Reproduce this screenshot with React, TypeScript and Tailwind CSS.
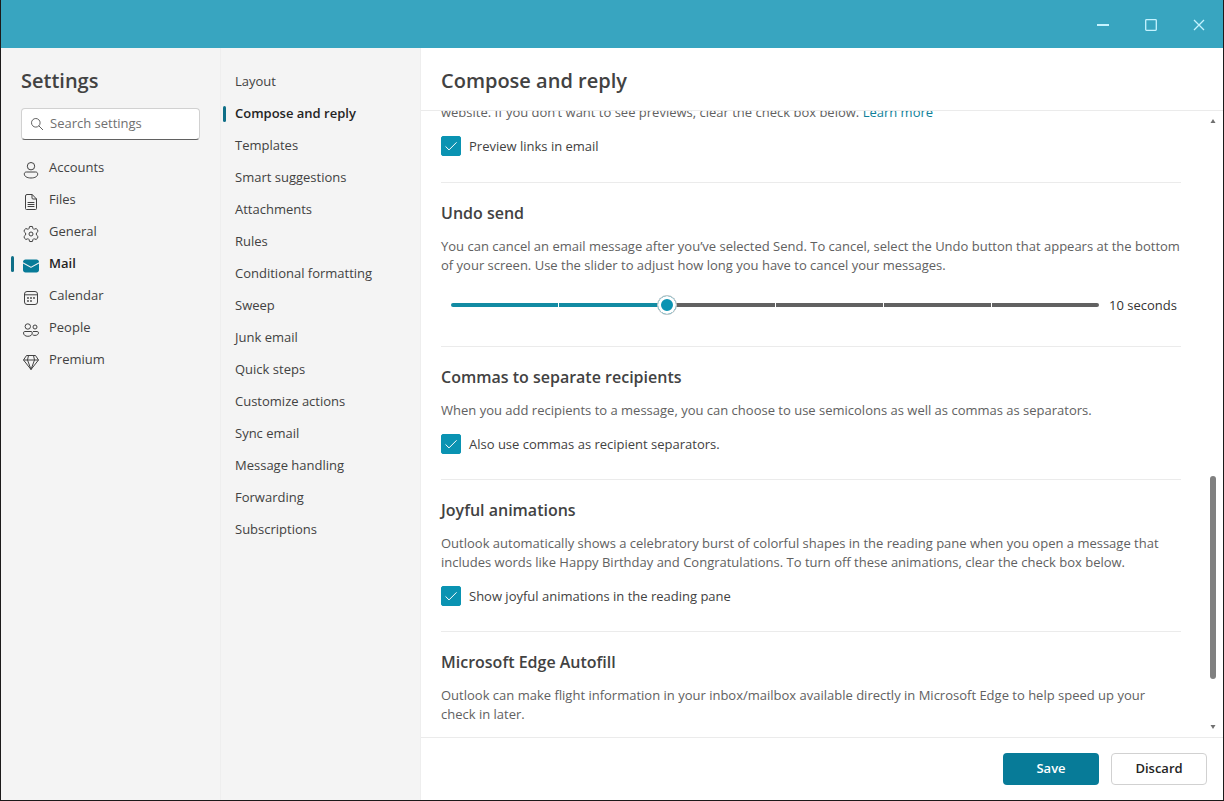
import { useState, type ReactNode } from "react";

const iconClass = "h-5 w-5 shrink-0 fill-none stroke-[#424242] stroke-1";

const icons: Record<string, ReactNode> = {
  Accounts: (
    <svg viewBox="0 0 20 20" className={iconClass} aria-hidden="true">
      <circle cx="10" cy="6.2" r="3.7" />
      <path d="M5.3 12h9.4c1.2 0 2 .9 2 2 0 2.400-2.700 4-6.700 4s-6.700-1.600-6.700-4c0-1.100.8-2 2-2z" />
    </svg>
  ),
  Files: (
    <svg viewBox="0 0 20 20" className={iconClass} aria-hidden="true">
      <path d="M6 2.500h5.200L15.500 7v9.500a1 1 0 0 1-1 1H5.500a1 1 0 0 1-1-1V4a1.500 1.500 0 0 1 1.500-1.500z" />
      <path d="M11 2.700V6a1 1 0 0 0 1 1h3.300M7 10.500h6M7 12.500h6M7 14.500h6" strokeLinecap="round" />
    </svg>
  ),
  General: (
    <svg viewBox="0 0 20 20" className={iconClass} aria-hidden="true">
      <path
        strokeLinejoin="round"
        d="M8.500 2.600Q10 2.200 11.500 2.600L11.900 4.400Q12.300 5.500 13.500 5.100L15.300 4.500Q16.500 5.700 17.100 7.300L15.700 8.700Q14.700 10 15.700 11.300L17.100 12.700Q16.500 14.300 15.300 15.500L13.500 14.900Q12.300 14.500 11.900 15.600L11.500 17.400Q10 17.800 8.500 17.400L8.100 15.600Q7.700 14.500 6.500 14.900L4.700 15.500Q3.500 14.300 2.900 12.700L4.300 11.300Q5.300 10 4.300 8.700L2.900 7.300Q3.500 5.700 4.700 4.500L6.500 5.100Q7.700 5.500 8.100 4.400z"
      />
      <circle cx="10" cy="10" r="2" />
    </svg>
  ),
  Mail: (
    <svg viewBox="0 0 20 20" className="h-5 w-5 shrink-0 fill-[#077b98]" aria-hidden="true">
      <path d="M2 6.300V5.900C2 4.600 3.100 3.500 4.500 3.500h11C16.900 3.500 18 4.600 18 5.900v.4l-8 4.400z" />
      <path d="M2 7.500v6.600c0 1.400 1.100 2.400 2.500 2.400h11c1.400 0 2.500-1 2.500-2.400V7.500l-7.800 4.300a.5.500 0 0 1-.5 0z" />
    </svg>
  ),
  Calendar: (
    <svg viewBox="0 0 20 20" className={iconClass} aria-hidden="true">
      <rect x="3.500" y="3.500" width="13" height="13" rx="2.500" />
      <path d="M3.500 6.800h13" />
      <g className="fill-[#424242] stroke-none">
        <circle cx="10" cy="10" r="0.900" />
        <circle cx="13" cy="10" r="0.900" />
        <circle cx="7" cy="10" r="0.900" />
        <circle cx="7" cy="13" r="0.900" />
        <circle cx="10" cy="13" r="0.900" />
      </g>
    </svg>
  ),
  People: (
    <svg viewBox="0 0 20 20" className={iconClass} aria-hidden="true">
      <circle cx="6.800" cy="6.500" r="2.700" />
      <circle cx="14" cy="7" r="2" />
      <path d="M3.800 11.500h6.200c.8 0 1.300.6 1.300 1.300 0 2-1.600 3.500-4.400 3.500s-4.400-1.500-4.400-3.500c0-.7.500-1.300 1.300-1.300z" />
      <path d="M12.300 11.500h3.900c.8 0 1.300.6 1.300 1.300 0 1.500-1.300 2.600-3.500 2.600-.8 0-1.400-.1-2-.4" strokeLinecap="round" />
    </svg>
  ),
  Premium: (
    <svg viewBox="0 0 20 20" className={iconClass} aria-hidden="true">
      <path
        strokeLinejoin="round"
        d="M5.500 3.500h9l3 4.500-7.500 9.500L2.500 8zM2.500 8h15M7.500 3.500L6.500 8l3.500 9.500L13.500 8l-1-4.500"
      />
    </svg>
  ),
};

const sections = ["Accounts", "Files", "General", "Mail", "Calendar", "People", "Premium"];

const pages = [
  "Layout",
  "Compose and reply",
  "Templates",
  "Smart suggestions",
  "Attachments",
  "Rules",
  "Conditional formatting",
  "Sweep",
  "Junk email",
  "Quick steps",
  "Customize actions",
  "Sync email",
  "Message handling",
  "Forwarding",
  "Subscriptions",
];

function Marker({ active }: { active: boolean }) {
  return <span className={`h-4 w-[3px] shrink-0 rounded-sm ${active ? "bg-[#0f6f88]" : ""}`} />;
}

function Checkbox({ label }: { label: string }) {
  return (
    <label className="flex items-center gap-2 self-start leading-5 text-[#424242]">
      <span className="grid h-5 w-5 shrink-0">
        <input
          type="checkbox"
          defaultChecked
          className="peer col-start-1 row-start-1 h-5 w-5 appearance-none rounded-xs border border-[#616161] checked:border-[#0a93b2] checked:bg-[#0a93b2]"
        />
        <svg
          viewBox="0 0 20 20"
          aria-hidden="true"
          className="pointer-events-none invisible col-start-1 row-start-1 h-5 w-5 fill-none stroke-white stroke-1 peer-checked:visible"
        >
          <path d="M4.800 10.700l3.200 3.200 7.300-7.300" strokeLinecap="round" strokeLinejoin="round" />
        </svg>
      </span>
      {label}
    </label>
  );
}

function Setting({ title, text, children }: { title: string; text: string; children?: ReactNode }) {
  return (
    <section className="flex flex-col gap-3.5 border-t border-[#ebebeb] pt-5 pb-[25px]">
      <h3 className="text-base leading-5 font-semibold">{title}</h3>
      <p className="leading-[19px] text-[#616161]">{text}</p>
      {children}
    </section>
  );
}

function UndoSlider() {
  const [step, setStep] = useState(2);
  return (
    <div className="flex items-center pt-1.5 pb-1.5 leading-5">
      <div className="relative flex h-5 flex-1 items-center px-2.5">
        <div className="flex h-1 flex-1 gap-px overflow-hidden rounded-sm">
          {[0, 1, 2, 3, 4, 5].map((i) => (
            <span key={i} className={`flex-1 ${i < step ? "bg-[#128ba3]" : "bg-[#616161]"}`} />
          ))}
        </div>
        <input
          type="range"
          min={0}
          max={6}
          value={step}
          onChange={(e) => setStep(Number(e.target.value))}
          aria-label="Time to cancel a message"
          className="absolute inset-0 h-5 w-full appearance-none bg-transparent [&::-webkit-slider-thumb]:h-5 [&::-webkit-slider-thumb]:w-5 [&::-webkit-slider-thumb]:appearance-none [&::-webkit-slider-thumb]:rounded-full [&::-webkit-slider-thumb]:border [&::-webkit-slider-thumb]:border-[#c8c8c8] [&::-webkit-slider-thumb]:bg-[#0a93b2] [&::-webkit-slider-thumb]:shadow-[inset_0_0_0_3px_white]"
        />
      </div>
      <output className="w-[72px] whitespace-nowrap text-[#333333]">{step * 5} seconds</output>
    </div>
  );
}

export default function App() {
  return (
    <div className="flex h-screen flex-col overflow-hidden border-x border-b border-[#1c1a1a] bg-white font-['Open_Sans','Noto_Sans',sans-serif] text-[13px] text-[#424242]">
      <header className="flex h-12 shrink-0 justify-end bg-[#38a5c0]">
        <button aria-label="Minimize" className="grid w-12 place-items-center">
          <svg viewBox="0 0 14 14" className="h-3.5 w-3.5 fill-none stroke-[#c5f3ff] stroke-2">
            <path d="M1 8h12" />
          </svg>
        </button>
        <button aria-label="Maximize" className="grid w-12 place-items-center">
          <svg viewBox="0 0 14 14" className="h-3.5 w-3.5 fill-none stroke-[#c5f3ff] stroke-[1.3]">
            <rect x="1.700" y="2.700" width="10.600" height="10.600" rx="0.800" />
          </svg>
        </button>
        <button aria-label="Close" className="grid w-12 place-items-center">
          <svg viewBox="0 0 14 14" className="h-3.5 w-3.5 fill-none stroke-[#c5f3ff] stroke-[1.3]">
            <path d="M2 3l10 10M12 3L2 13" />
          </svg>
        </button>
      </header>

      <div className="flex min-h-0 flex-1">
        <aside className="w-[220px] shrink-0 border-r border-[#eeeeee] bg-[#f4f4f4] pt-5">
          <h1 className="px-5 text-xl leading-[26px] font-semibold">Settings</h1>
          <label className="mx-5 mt-3.5 flex h-8 items-center gap-1.5 rounded-sm border border-[#d1d1d1] border-b-[#616161] bg-white px-2">
            <svg viewBox="0 0 14 14" className="h-3.5 w-3.5 shrink-0 fill-none stroke-[#616161] stroke-1" aria-hidden="true">
              <circle cx="5.800" cy="5.800" r="4.300" />
              <path d="M9 9l3.700 3.700" strokeLinecap="round" />
            </svg>
            <input
              type="search"
              aria-label="Search settings"
              placeholder="Search settings"
              className="w-full min-w-0 bg-transparent outline-none placeholder:text-[#707070]"
            />
          </label>
          <nav aria-label="Settings sections" className="mt-3">
            {sections.map((name) => {
              const active = name === "Mail";
              return (
                <a key={name} href="#" className={`flex h-8 items-center pl-2.5 ${active ? "font-semibold text-[#242424]" : ""}`}>
                  <Marker active={active} />
                  <span className="flex items-center gap-2 pl-[7px]">
                    <span className="pt-1">{icons[name]}</span>
                    {name}
                  </span>
                </a>
              );
            })}
          </nav>
        </aside>

        <nav aria-label="Mail settings" className="w-[200px] shrink-0 border-r border-[#eeeeee] bg-[#f4f4f4] pt-[18px]">
          {pages.map((name) => {
            const active = name === "Compose and reply";
            return (
              <a key={name} href="#" className={`flex h-8 items-center gap-[9px] pl-0.5 ${active ? "font-semibold text-[#242424]" : ""}`}>
                <Marker active={active} />
                {name}
              </a>
            );
          })}
        </nav>

        <main className="flex min-w-0 flex-1 flex-col">
          <div className="border-b border-[#ebebeb] px-5 pt-5 pb-4">
            <h2 className="text-xl leading-[26px] font-semibold">Compose and reply</h2>
          </div>

          <div className="flex min-h-0 flex-1">
            <div className="min-w-0 flex-1 overflow-hidden pr-[26px] pl-5">
              <div className="-mt-2 flex flex-col gap-3.5 pb-[26px]">
                <p className="leading-[19px] text-[#616161]">
                  website. If you don’t want to see previews, clear the check box below.{" "}
                  <a href="#" className="text-[#0f7f99]">
                    Learn more
                  </a>
                </p>
                <Checkbox label="Preview links in email" />
              </div>
              <Setting
                title="Undo send"
                text="You can cancel an email message after you’ve selected Send. To cancel, select the Undo button that appears at the bottom of your screen. Use the slider to adjust how long you have to cancel your messages."
              >
                <UndoSlider />
              </Setting>
              <Setting
                title="Commas to separate recipients"
                text="When you add recipients to a message, you can choose to use semicolons as well as commas as separators."
              >
                <Checkbox label="Also use commas as recipient separators." />
              </Setting>
              <Setting
                title="Joyful animations"
                text="Outlook automatically shows a celebratory burst of colorful shapes in the reading pane when you open a message that includes words like Happy Birthday and Congratulations. To turn off these animations, clear the check box below."
              >
                <Checkbox label="Show joyful animations in the reading pane" />
              </Setting>
              <Setting
                title="Microsoft Edge Autofill"
                text="Outlook can make flight information in your inbox/mailbox available directly in Microsoft Edge to help speed up your check in later."
              />
            </div>
            <div className="flex w-3 shrink-0 flex-col items-center pt-2 pb-2" aria-hidden="true">
              <svg viewBox="0 0 6 4" className="h-1 w-1.5 shrink-0 fill-[#707070]">
                <path d="M3 0l2.500 4h-5z" />
              </svg>
              <div className="flex-[352]" />
              <div className="w-1.5 flex-[203] rounded-full bg-[#808080]" />
              <div className="flex-[46]" />
              <svg viewBox="0 0 6 4" className="h-1 w-1.5 shrink-0 fill-[#707070]">
                <path d="M3 4l2.500-4h-5z" />
              </svg>
            </div>
            <div className="w-1 shrink-0" />
          </div>

          <footer className="flex justify-end gap-3 border-t border-[#ebebeb] px-4 py-[15px] font-semibold">
            <button className="h-8 w-24 rounded-sm bg-[#077b98] text-white">Save</button>
            <button className="h-8 w-24 rounded-sm border border-[#d1d1d1] bg-white text-[#242424]">Discard</button>
          </footer>
        </main>
      </div>
    </div>
  );
}
